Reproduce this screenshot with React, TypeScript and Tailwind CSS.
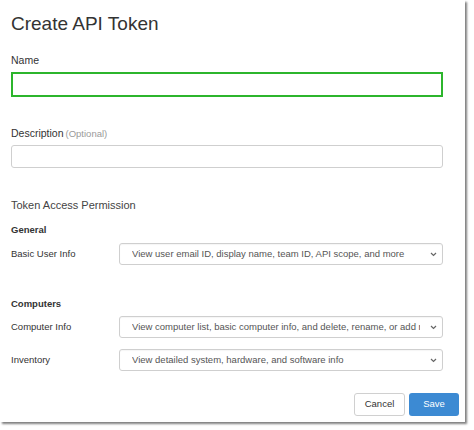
import React from "react";

const font = { fontFamily: '"Liberation Sans", Arial, sans-serif' };

function Chevron() {
  return (
    <svg width="7" height="5" viewBox="0 0 7 5" className="shrink-0">
      <path d="M1 1 L3.5 3.5 L6 1" fill="none" stroke="#666" strokeWidth="1.2" />
    </svg>
  );
}

function PermSelect({ text }: { text: string }) {
  return (
    <div className="flex h-[22px] w-[324px] items-center rounded-[3px] border border-[#cfcfcf] bg-white pl-[12px] pr-[4px] shadow-[inset_0_1px_1px_rgba(0,0,0,0.04)]">
      <span className="flex-1 overflow-hidden whitespace-nowrap text-[9.5px] text-[#555]">{text}</span>
      <span className="ml-[10px] mr-[1px] flex items-center">
        <Chevron />
      </span>
    </div>
  );
}

function PermRow({ label, text, className = "" }: { label: string; text: string; className?: string }) {
  return (
    <div className={`flex items-center ${className}`}>
      <div className="w-[108px] text-[9.5px] text-[#333]">{label}</div>
      <PermSelect text={text} />
    </div>
  );
}

export default function App() {
  return (
    <div className="h-[430px] w-[474px] bg-white" style={font}>
      <div className="flex h-[422px] w-[465px] flex-col bg-white pl-[11px] pt-[13px] shadow-[2px_2px_2px_rgba(0,0,0,0.5)]">
        <div className="w-[432px]">
          <h1 className="text-[19px] leading-[22px] text-[#333]">Create API Token</h1>

          <div className="mt-[18px] text-[10.5px] leading-[14px] text-[#333]">Name</div>
          <div className="mt-[5px] h-[25px] w-full border-2 border-[#2cb52c] bg-white" />

          <div className="mt-[29px] flex items-baseline text-[10.5px] leading-[14px] text-[#333]">
            <span>Description</span>
            <span className="ml-[2px] text-[9.5px] text-[#9a9a9a]">(Optional)</span>
          </div>
          <div className="mt-[4px] h-[23px] w-full rounded-[3px] border border-[#cfcfcf] bg-white" />

          <div className="mt-[30px] text-[11px] leading-[14px] text-[#444]">Token Access Permission</div>

          <div className="mt-[11px] text-[9.5px] font-bold leading-[13px] text-[#333]">General</div>
          <PermRow
            className="mt-[7px]"
            label="Basic User Info"
            text="View user email ID, display name, team ID, API scope, and more"
          />

          <div className="mt-[32px] text-[9.5px] font-bold leading-[13px] text-[#333]">Computers</div>
          <PermRow
            className="mt-[6px]"
            label="Computer Info"
            text="View computer list, basic computer info, and delete, rename, or add new computers"
          />
          <PermRow
            className="mt-[11px]"
            label="Inventory"
            text="View detailed system, hardware, and software info"
          />
        </div>

        {/* footer buttons */}
        <div className="mt-[22px] flex justify-end gap-[4px] pr-[6px]">
          <button className="h-[23px] w-[51px] rounded-[3px] border border-[#d0d0d0] bg-white text-[9.5px] text-[#333]">
            Cancel
          </button>
          <button className="h-[23px] w-[50px] rounded-[3px] bg-[#3c8ad3] text-[9.5px] text-white">
            Save
          </button>
        </div>
      </div>
    </div>
  );
}
